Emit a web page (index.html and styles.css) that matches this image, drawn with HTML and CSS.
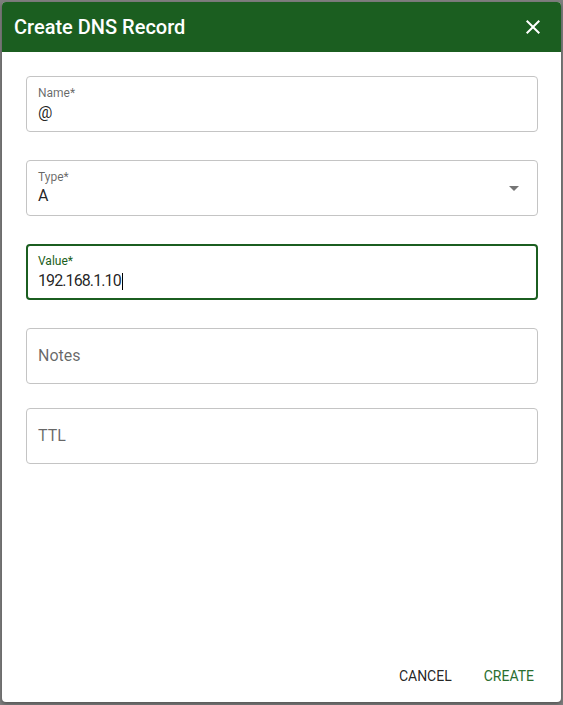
FILE: index.html
```html
<!DOCTYPE html>
<html lang="en">
<head>
<meta charset="utf-8">
<title>Create DNS Record</title>
<link rel="stylesheet" href="styles.css">
</head>
<body>
<div class="backdrop">
  <div class="dialog">
    <div class="dialog-header">
      <h2 class="dialog-title">Create DNS Record</h2>
      <button class="close-btn" aria-label="Close">
        <svg viewBox="0 0 24 24" width="24" height="24"><path fill="#fff" d="M19 6.41 17.59 5 12 10.59 6.41 5 5 6.41 10.59 12 5 17.59 6.41 19 12 13.41 17.59 19 19 17.59 13.41 12z"/></svg>
      </button>
    </div>
    <div class="dialog-body">
      <div class="field field-name">
        <div class="field-label">Name*</div>
        <div class="field-value">@</div>
      </div>
      <div class="field field-type">
        <div class="field-text">
          <div class="field-label">Type*</div>
          <div class="field-value">A</div>
        </div>
        <svg class="select-arrow" viewBox="0 0 10 5" width="10" height="5"><path fill="#757575" d="M0 0l5 5 5-5z"/></svg>
      </div>
      <div class="field field-value-input focused">
        <div class="field-label">Value*</div>
        <div class="field-value"><span class="ip">192.168.1.10</span><span class="caret"></span></div>
      </div>
      <div class="field field-empty field-notes">
        <div class="placeholder">Notes</div>
      </div>
      <div class="field field-empty field-ttl">
        <div class="placeholder">TTL</div>
      </div>
    </div>
    <div class="dialog-actions">
      <button class="btn btn-cancel">Cancel</button>
      <button class="btn btn-create">Create</button>
    </div>
  </div>
</div>
</body>
</html>
```

FILE: styles.css
```css
* { box-sizing: border-box; }
html, body { margin: 0; padding: 0; }
body {
  background: #7f7f7f;
  font-family: Roboto, "Liberation Sans", sans-serif;
  width: 563px;
  height: 705px;
  overflow: hidden;
}
.backdrop {
  padding: 2px 2px 0 2px;
}
.dialog {
  width: 559px;
  height: 700px;
  background: #fff;
  border-radius: 4px;
  box-shadow: 0 2px 4px rgba(0,0,0,0.35);
  display: flex;
  flex-direction: column;
  overflow: hidden;
}
.dialog-header {
  height: 50px;
  background: #1b5e20;
  display: flex;
  align-items: center;
  justify-content: space-between;
  padding: 0 16px 0 12px;
}
.dialog-title {
  margin: 0;
  color: #fff;
  font-size: 20px;
  font-weight: 500;
  line-height: 24px;
}
.close-btn {
  border: 0;
  background: none;
  padding: 0;
  width: 24px;
  height: 24px;
  display: flex;
}
.dialog-body {
  flex: 1;
  padding: 24px 23px 0 24px;
  display: flex;
  flex-direction: column;
}
.field {
  height: 56px;
  border: 1px solid #c4c4c4;
  border-radius: 4px;
  padding: 9px 11px 0 11px;
}
.field-type { margin-top: 28px; display: flex; align-items: center; justify-content: space-between; padding-right: 18px; padding-top: 0; }
.field-type .field-text { padding-top: 9px; align-self: flex-start; }
.field-type .field-value { margin-top: -1px; }
.field-value-input { margin-top: 28px; }
.field-notes { margin-top: 28px; }
.field-ttl { margin-top: 24px; }
.field-label {
  font-size: 12px;
  line-height: 14px;
  color: rgba(0,0,0,0.6);
  margin-bottom: 3px;
}
.field-value {
  font-size: 16px;
  line-height: 20px;
  color: rgba(0,0,0,0.87);
  display: flex;
  align-items: center;
}
.ip { letter-spacing: -0.9px; }
.focused {
  border: 2px solid #1b5e20;
  padding: 8px 10px 0 10px;
}
.focused .field-label { color: #1b5e20; }
.caret {
  display: inline-block;
  width: 1px;
  height: 17px;
  background: #000;
  margin-left: 1px;
}
.select-arrow { display: block; margin-top: 1px; }
.field-empty {
  display: flex;
  align-items: center;
  padding-top: 0;
}
.placeholder {
  font-size: 16px;
  color: rgba(0,0,0,0.6);
  line-height: 20px;
}
.dialog-actions {
  display: flex;
  justify-content: flex-end;
  align-items: center;
  gap: 16px;
  padding: 0 19px 0 0;
  height: 52px;
}
.btn {
  border: 0;
  background: none;
  font-family: Roboto, "Liberation Sans", sans-serif;
  font-size: 14px;
  font-weight: 400;
  text-transform: uppercase;
  letter-spacing: 0;
  padding: 6px 8px;
  line-height: 20px;
}
.btn-cancel { color: rgba(0,0,0,0.87); }
.btn-create { color: #2a6e2f; }
```
